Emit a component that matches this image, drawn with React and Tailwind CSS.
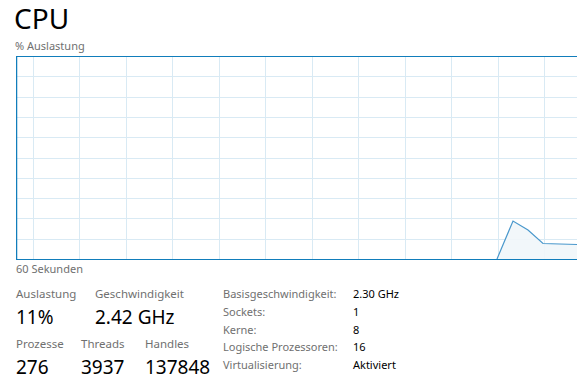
import React from "react";

const font = { fontFamily: '"Segoe UI", "Noto Sans", sans-serif' };

function Chart() {
  const W = 561;
  const H = 203;
  const vx = [];
  for (let x = 16.5; x < W; x += 46.5) vx.push(Math.round(x) + 0.5);
  const hy = [];
  for (let i = 1; i < 10; i++) hy.push(Math.round(i * 20.3) + 0.5);
  const pts = "481,203 497,165 512,174 527,187.5 561,188.5";
  return (
    <svg width={W} height={H + 1} className="block">
      {vx.map((x) => (
        <line key={"v" + x} x1={x} y1={0} x2={x} y2={H} stroke="#d9eaf4" strokeWidth="1" />
      ))}
      {hy.map((y) => (
        <line key={"h" + y} x1={0} y1={y} x2={W} y2={y} stroke="#d9eaf4" strokeWidth="1" />
      ))}
      <polygon points={pts + " 561,203 481,203"} fill="#f1f6fa" fillOpacity="0.9" />
      <polyline points={pts} fill="none" stroke="#4a98cc" strokeWidth="1.2" />
      <line x1={0} y1={0.5} x2={W} y2={0.5} stroke="#117dbb" strokeWidth="1" />
      <line x1={0} y1={H + 0.5} x2={W} y2={H + 0.5} stroke="#117dbb" strokeWidth="1" />
      <line x1={0.5} y1={0} x2={0.5} y2={H + 1} stroke="#117dbb" strokeWidth="1.5" />
    </svg>
  );
}

function Stat({ label, value, className = "" }) {
  return (
    <div className={"flex flex-col " + className}>
      <div className="text-[11.5px] leading-[16px] text-[#707070]">{label}</div>
      <div className="text-[19px] leading-[20px] text-black mt-[5px]">{value}</div>
    </div>
  );
}

export default function App() {
  const rows = [
    ["Basisgeschwindigkeit:", "2.30 GHz"],
    ["Sockets:", "1"],
    ["Kerne:", "8"],
    ["Logische Prozessoren:", "16"],
    ["Virtualisierung:", "Aktiviert"],
  ];
  return (
    <div className="w-[577px] h-[377px] overflow-hidden bg-white" style={font}>
      <div className="pl-[14px] pt-[0px] text-[28px] leading-[36px] text-black">CPU</div>
      <div className="pl-[15px] mt-[3px] text-[11px] leading-[14px] text-[#707070]">% Auslastung</div>
      <div className="ml-[16px] mt-[3px]">
        <Chart />
      </div>
      <div className="pl-[16px] mt-[2px] text-[11px] leading-[14px] text-[#707070]">60 Sekunden</div>
      <div className="flex pl-[16px] mt-[10px]">
        <div className="flex flex-col w-[207px]">
          <div className="flex">
            <Stat label="Auslastung" value="11%" className="w-[79px]" />
            <Stat label="Geschwindigkeit" value="2.42 GHz" />
          </div>
          <div className="flex mt-[9px]">
            <Stat label="Prozesse" value="276" className="w-[65px]" />
            <Stat label="Threads" value="3937" className="w-[64px]" />
            <Stat label="Handles" value="137848" />
          </div>
        </div>
        <div className="flex flex-col text-[11px] leading-[17.8px] mt-[-1px]">
          {rows.map(([k, v]) => (
            <div key={k} className="flex">
              <div className="w-[130px] text-[#707070]">{k}</div>
              <div className="text-black">{v}</div>
            </div>
          ))}
        </div>
      </div>
    </div>
  );
}
